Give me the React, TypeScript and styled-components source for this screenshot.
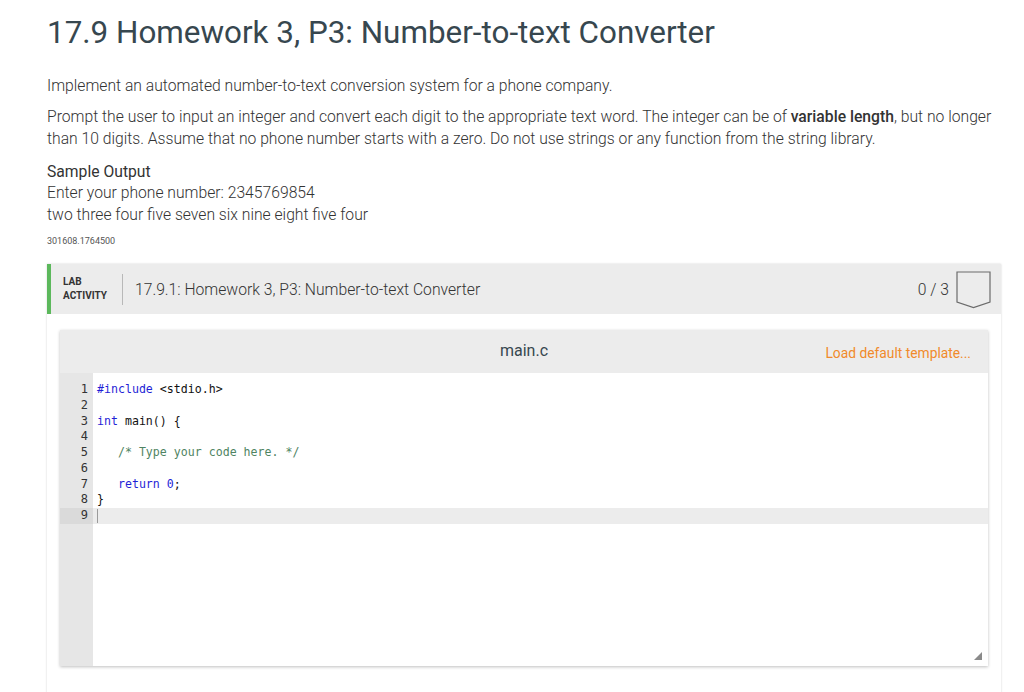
import styled, { createGlobalStyle } from "styled-components";

const GlobalStyle = createGlobalStyle`
  html, body {
    margin: 0;
    padding: 0;
    background: #ffffff;
  }
  body {
    font-family: Roboto, "Liberation Sans", sans-serif;
    color: #333333;
  }
`

const codeLines: { key: string, parts: { text: string, kind?: string }[] }[] = [
  { key: "1", parts: [{ text: "#include", kind: "kw" }, { text: " <stdio.h>" }] },
  { key: "2", parts: [] },
  { key: "3", parts: [{ text: "int", kind: "kw" }, { text: " main() {" }] },
  { key: "4", parts: [] },
  { key: "5", parts: [{ text: "   " }, { text: "/* Type your code here. */", kind: "comment" }] },
  { key: "6", parts: [] },
  { key: "7", parts: [{ text: "   " }, { text: "return", kind: "kw" }, { text: " " }, { text: "0", kind: "num" }, { text: ";" }] },
  { key: "8", parts: [{ text: "}" }] },
  { key: "9", parts: [] },
]

const App = () => {
  return (
    <>
      <GlobalStyle />
      <Page>
        <Title>17.9 Homework 3, P3: Number-to-text Converter</Title>
        <Paragraph>Implement an automated number-to-text conversion system for a phone company.</Paragraph>
        <Paragraph>
          Prompt the user to input an integer and convert each digit to the appropriate text word. The integer can be of <Strong>variable length</Strong>, but no longer than 10 digits. Assume that no phone number starts with a zero. Do not use strings or any function from the string library.
        </Paragraph>
        <SampleBlock>
          <SampleTitle>Sample Output</SampleTitle>
          <SampleLine>Enter your phone number: 2345769854</SampleLine>
          <SampleLine>two three four five seven six nine eight five four</SampleLine>
        </SampleBlock>
        <RefId>301608.1764500</RefId>

        <LabBox>
          <LabHeader>
            <LabLabel>LAB<br />ACTIVITY</LabLabel>
            <Divider />
            <LabTitle>17.9.1: Homework 3, P3: Number-to-text Converter</LabTitle>
            <Score>0 / 3</Score>
            <Badge width="35" height="38" viewBox="0 0 35 38">
              <path d="M1 1 H34 V31 L17.5 36.5 L1 31 Z" fill="none" stroke="#6b6b6b" strokeWidth="1.2" />
            </Badge>
          </LabHeader>
          <LabBody>
            <Editor>
              <EditorBar>
                <FileName>main.c</FileName>
                <LoadLink>Load default template...</LoadLink>
              </EditorBar>
              <CodeArea>
                <Gutter>
                  {codeLines.map((line) => (
                    <LineNumber key={line.key} active={line.key === "9"}>{line.key}</LineNumber>
                  ))}
                </Gutter>
                <CodeColumn>
                  {codeLines.map((line) => (
                    <CodeLine key={line.key} active={line.key === "9"}>
                      {line.parts.map((p, i) => (
                        <Token key={i} kind={p.kind}>{p.text}</Token>
                      ))}
                      {line.key === "9" && <Cursor />}
                    </CodeLine>
                  ))}
                </CodeColumn>
                <Resize width="8" height="8" viewBox="0 0 8 8">
                  <path d="M8 0 L8 8 L0 8 Z" fill="#8a8a8a" />
                </Resize>
              </CodeArea>
            </Editor>
          </LabBody>
        </LabBox>
      </Page>
    </>
  );
}

export default App;

const Page = styled.div`
  padding: 14px 23px 0 47px;
  width: 954px;
  height: 692px;
  overflow: hidden;
`

const Title = styled.h1`
  margin: 0 0 23px 0;
  font-size: 31.4px;
  line-height: 38px;
  font-weight: 400;
  color: #37474f;
`

const Paragraph = styled.p`
  margin: 0 0 9px 0;
  font-size: 15.7px;
  line-height: 22px;
  font-weight: 300;
  color: #333333;
`

const Strong = styled.span`
  font-weight: 500;
`

const SampleBlock = styled.div`
  margin-top: 11px;
  display: flex;
  flex-direction: column;
`

const SampleTitle = styled.div`
  font-size: 15.7px;
  line-height: 21px;
  font-weight: 400;
  color: #333333;
`

const SampleLine = styled.div`
  font-size: 15.7px;
  line-height: 21.5px;
  font-weight: 300;
  color: #333333;
`

const RefId = styled.div`
  margin-top: 10px;
  font-size: 9px;
  line-height: 12px;
  color: #555555;
`

const LabBox = styled.div`
  margin-top: 17px;
  box-shadow: 0 0 2px rgba(0, 0, 0, 0.18);
  background: #ffffff;
`

const LabHeader = styled.div`
  display: flex;
  align-items: center;
  height: 50px;
  background: #ececec;
  border-left: 4px solid #5cb85c;
  padding: 0 10px 0 12px;
`

const LabLabel = styled.div`
  font-size: 10px;
  line-height: 14px;
  font-weight: 700;
  color: #333333;
  width: 50px;
`

const Divider = styled.div`
  width: 1px;
  height: 31px;
  background: #b8b8b8;
  margin: 0 12px 0 9px;
`

const LabTitle = styled.div`
  flex: 1;
  font-size: 15.7px;
  font-weight: 300;
  color: #333333;
`

const Score = styled.div`
  font-size: 15.7px;
  font-weight: 300;
  color: #333333;
  margin-right: 7px;
`

const Badge = styled.svg`
  display: block;
  margin-top: 2px;
`

const LabBody = styled.div`
  padding: 16px 13px 30px 13px;
`

const Editor = styled.div`
  box-shadow: 0 1px 3px rgba(0, 0, 0, 0.25);
  background: #ffffff;
`

const EditorBar = styled.div`
  position: relative;
  height: 43px;
  background: #ececec;
  display: flex;
  align-items: center;
  justify-content: center;
`

const FileName = styled.div`
  font-size: 16px;
  font-weight: 400;
  color: #37474f;
  margin-top: -3px;
`

const LoadLink = styled.div`
  position: absolute;
  right: 17px;
  top: 15px;
  font-size: 13.8px;
  color: #f18a2a;
`

const CodeArea = styled.div`
  position: relative;
  display: flex;
  height: 293px;
`

const Gutter = styled.div`
  width: 33px;
  background: #e6e6e6;
  padding-top: 9px;
  box-sizing: border-box;
`

const LineNumber = styled.div<{ active: boolean }>`
  height: 15.75px;
  line-height: 15.75px;
  text-align: right;
  padding-right: 5px;
  font-family: "DejaVu Sans Mono", "Liberation Mono", monospace;
  font-size: 12px;
  color: #333333;
  background: ${(props) => props.active ? '#dadada' : 'transparent'};
`

const CodeColumn = styled.div`
  flex: 1;
  padding-top: 9px;
`

const CodeLine = styled.div<{ active: boolean }>`
  height: 15.75px;
  line-height: 15.75px;
  padding-left: 4px;
  white-space: pre;
  font-family: "DejaVu Sans Mono", "Liberation Mono", monospace;
  font-size: 11.6px;
  color: #111111;
  background: ${(props) => props.active ? '#ececec' : 'transparent'};
`

const Token = styled.span<{ kind?: string }>`
  color: ${(props) =>
    props.kind === 'kw' ? '#1f1fd6' :
    props.kind === 'num' ? '#1f1fd6' :
    props.kind === 'comment' ? '#4f8462' : '#111111'};
`

const Cursor = styled.span`
  display: inline-block;
  width: 1px;
  height: 14px;
  vertical-align: middle;
  background: #9a9a9a;
`

const Resize = styled.svg`
  position: absolute;
  right: 6px;
  bottom: 6px;
`
